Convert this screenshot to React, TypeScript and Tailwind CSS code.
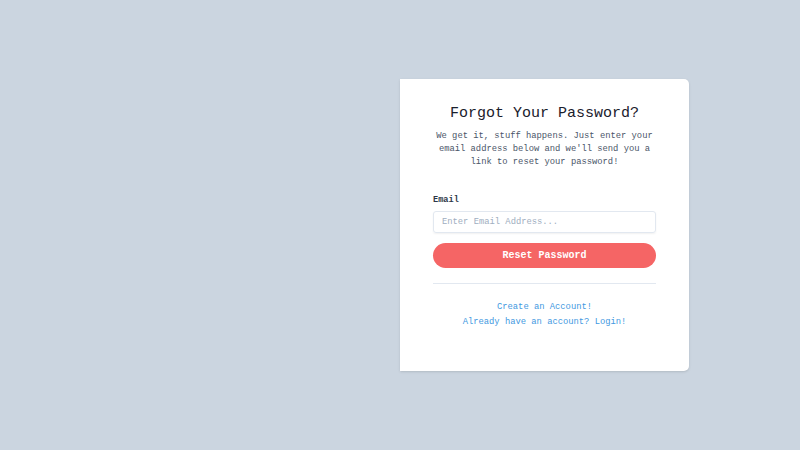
import React, { useState } from 'react';

export default function App() {
  const [email, setEmail] = useState('');

  return (
    <div className="w-full h-[450px] bg-[#cbd5e0] flex items-center justify-center font-['Liberation_Mono',monospace]">
      <div className="flex w-[578px] h-[292px]">
        {/* Image column (no image loaded) */}
        <div className="w-1/2" />

        {/* Form column */}
        <div className="w-1/2 bg-white rounded-r-[5px] shadow-sm px-[33px] pt-[26px]">
          <div className="text-center">
            <h1 className="text-[15px] leading-[18px] text-[#1a202c] mb-[7px]">Forgot Your Password?</h1>
            <p className="text-[8.8px] leading-[13px] text-[#4a5568]">
              We get it, stuff happens. Just enter your email address below and we'll send you a link to reset your password!
            </p>
          </div>

          <form className="mt-[25px]" onSubmit={(e) => e.preventDefault()}>
            <label className="block text-[8.6px] leading-[12px] font-bold text-[#2d3748] mb-[5px]">Email</label>
            <input
              type="email"
              value={email}
              onChange={(e) => setEmail(e.target.value)}
              placeholder="Enter Email Address..."
              className="block w-full h-[22px] px-[8px] text-[8.8px] text-[#4a5568] placeholder-[#a0aec0] border border-[#e2e8f0] rounded-[3px] shadow-[0_1px_2px_rgba(0,0,0,0.06)] outline-none"
            />
            <button
              type="submit"
              className="mt-[10px] w-full h-[25px] rounded-full bg-[#f56565] text-white text-[10px] font-bold"
            >
              Reset Password
            </button>
          </form>

          <hr className="mt-[15px] border-0 border-t border-[#e2e8f0]" />

          <div className="mt-[16px] text-center text-[8.8px] leading-[15px] text-[#4299e1]">
            <a href="#" className="block">Create an Account!</a>
            <a href="#" className="block">Already have an account? Login!</a>
          </div>
        </div>
      </div>
    </div>
  );
}
